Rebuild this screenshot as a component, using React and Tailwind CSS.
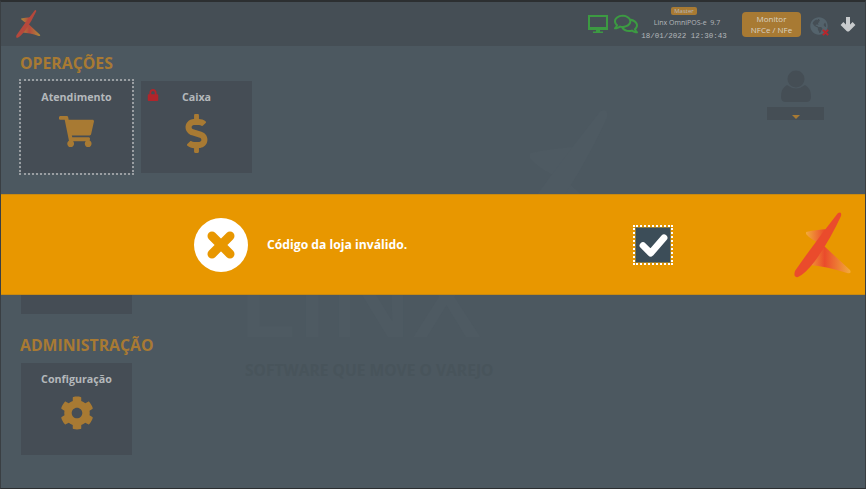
import {
  FaShoppingCart,
  FaDollarSign,
  FaCog,
  FaLock,
  FaRegComments,
  FaGlobeAmericas,
} from "react-icons/fa";

function Logo({ id, className, stroke, tip }) {
  return (
    <svg viewBox="792 210 60 70" className={className}>
      <defs>
        <linearGradient id={id} x1="0" y1="0" x2="1" y2="0">
          <stop offset="0" stopColor={tip} />
          <stop offset="0.42" stopColor={stroke} />
          <stop offset="1" stopColor={tip} />
        </linearGradient>
      </defs>
      <path
        d="M806 232 Q815 230 828 229 L823 245 L850 270 Q852 274 847 273 Q825 266 810 265 L822 244 Q811 240 806 234Z"
        fill={`url(#${id})`}
      />
      <path
        d="M838 213 Q842 211 841 216 Q830 240 815 261 Q805 274 798 277 Q793 278 795 271 Q815 242 838 213Z"
        fill={stroke}
      />
    </svg>
  );
}

function Card({ title, icon, locked, focused }) {
  return (
    <div
      className={`relative w-[111px] h-[92px] bg-[#454d55] flex flex-col items-center pt-[8px] ${
        focused ? "outline-2 outline-dotted outline-[#9a9ea2]" : ""
      }`}
    >
      {locked && (
        <FaLock className="absolute left-[6px] top-[8px] text-[12px] text-[#b0252b]" />
      )}
      {title && (
        <span className="text-[10.7px] font-bold leading-[16px] text-[#b4b8bb]">{title}</span>
      )}
      <div className="mt-[9px] text-[#a87a33]">{icon}</div>
    </div>
  );
}

function Section({ title, children }) {
  return (
    <section className="h-[141px]">
      <h2 className="h-[26px] -ml-[1px] text-[15.8px] leading-[17px] font-bold text-[#a87a33]">{title}</h2>
      <div className="flex gap-[9px]">{children}</div>
    </section>
  );
}

export default function App() {
  return (
    <div className="relative w-[866px] h-[489px] overflow-hidden bg-[#4c5860] border-t-2 border-x border-b border-t-[#2c2f31] border-x-[#3a3f43] border-b-[#2c2f31] font-['Open_Sans',sans-serif]">
      {/* marca d'agua */}
      <Logo
        id="wm"
        className="absolute left-[498px] top-[103px] w-[132px] h-[154px]"
        stroke="#4e5a62"
        tip="#4e5a62"
      />
      <span className="absolute left-[236px] top-[244px] text-[108px] leading-[100px] font-semibold text-[#4e5a62]">
        LINX
      </span>
      <span className="absolute left-[244px] top-[357px] text-[15.6px] leading-[22px] font-bold text-[#48545b]">
        SOFTWARE QUE MOVE O VAREJO
      </span>

      {/* topo */}
      <header className="relative h-[44px] bg-[#454e55] flex items-center pl-[14px] pr-[9px]">
        <Logo id="top" className="w-[26px] h-[30px]" stroke="#b5483c" tip="#ac8b3a" />
        <div className="ml-auto flex items-center">
          <svg viewBox="0 0 20 18" className="w-[20px] h-[18px]">
            <path d="M1 1H19V13H1Z" fill="none" stroke="#3c9a42" strokeWidth="2" />
            <path d="M0 12H20V15H0ZM8 15H12V16.5H15V18H5V16.5H8Z" fill="#3c9a42" />
          </svg>
          <FaRegComments className="ml-[6px] text-[24px] text-[#3c9a42]" />
          <div className="ml-[2px] w-[88px] flex flex-col items-center text-[#b4b8bb]">
            <span className="h-[8px] px-[3px] rounded-[2px] bg-[#a87a33] text-[6px] leading-[8px]">Master</span>
            <span className="mt-[3px] pl-[6px] text-[7px] leading-[10px] whitespace-pre">Linx OmniPOS-e  9.7</span>
            <span className="mt-[3px] font-['Liberation_Mono',monospace] text-[7.5px] leading-[10px]">18/01/2022 12:30:43</span>
          </div>
          <button className="ml-[14px] mt-[1px] pb-[2px] w-[59px] h-[25px] rounded-[4px] bg-[#a87a33] text-[8px] leading-[11px] text-[#d8d2c4]">
            Monitor
            <br />
            NFCe / NFe
          </button>
          <div className="relative ml-[9px] mt-[3px]">
            <FaGlobeAmericas className="text-[18px] text-[#54636c]" />
            <svg viewBox="0 0 8 8" className="absolute -right-[1px] -bottom-[1px] w-[7px] h-[7px]">
              <path d="M1 1L7 7M7 1L1 7" stroke="#b8262c" strokeWidth="2.4" />
            </svg>
          </div>
          <svg viewBox="0 0 16 16" className="ml-[12px] w-[16px] h-[16px]">
            <path d="M8 1V13M2 7.5L8 13.5L14 7.5" fill="none" stroke="#c8cbcd" strokeWidth="4" strokeLinejoin="round" />
          </svg>
        </div>
      </header>

      <main className="relative flex justify-between pl-[20px] pr-[41px] pt-[9px]">
        <div>
          <Section title="OPERAÇÕES">
            <Card title="Atendimento" focused icon={<FaShoppingCart className="text-[35px]" />} />
            <Card title="Caixa" locked icon={<FaDollarSign className="text-[39px]" />} />
          </Section>
          <Section>
            <Card />
          </Section>
          <Section title="ADMINISTRAÇÃO">
            <Card title="Configuração" icon={<FaCog className="text-[34px]" />} />
          </Section>
        </div>
        <div className="flex flex-col items-center pt-[15px]">
          <svg viewBox="0 0 30 32" className="w-[30px] h-[32px]">
            <circle cx="15" cy="9" r="8.5" fill="#454e55" />
            <path d="M6 15Q15 22 24 15Q30 18 30 27Q30 32 25 32H5Q0 32 0 27Q0 18 6 15Z" fill="#454e55" />
          </svg>
          <div className="mt-[5px] w-[57px] h-[13px] bg-[#454e55] flex items-end justify-center">
            <span className="mb-[1px] border-x-[4px] border-t-[4px] border-x-transparent border-t-[#a87a33]" />
          </div>
        </div>
      </main>

      {/* alerta */}
      <div className="absolute left-0 right-0 top-[192px] h-[101px] bg-[#e89700] border-y border-[#c98a10] flex items-center">
        <div className="ml-[193px] w-[54px] h-[54px] rounded-full bg-white flex items-center justify-center">
          <svg viewBox="0 0 28 28" className="w-[28px] h-[28px]">
            <path d="M5 5L23 23M23 5L5 23" stroke="#e89700" strokeWidth="9" strokeLinecap="round" />
          </svg>
        </div>
        <p className="ml-[19px] mt-[1px] text-[12.2px] font-bold text-white">Código da loja inválido.</p>
        <button className="absolute left-[634px] top-[32px] w-[36px] h-[36px] bg-[#3c4d58] border border-[#8a7a40] outline-2 outline-dotted outline-white flex items-center justify-center">
          <svg viewBox="0 0 30 24" className="w-[29px] h-[23px]">
            <path d="M4 12L12 20L26 4" fill="none" stroke="white" strokeWidth="7" strokeLinejoin="round" strokeLinecap="round" />
          </svg>
        </button>
        <Logo
          id="bn"
          className="absolute left-[791px] top-[15px] w-[60px] h-[70px]"
          stroke="#ea4b2c"
          tip="#f2ab3a"
        />
      </div>
    </div>
  );
}
